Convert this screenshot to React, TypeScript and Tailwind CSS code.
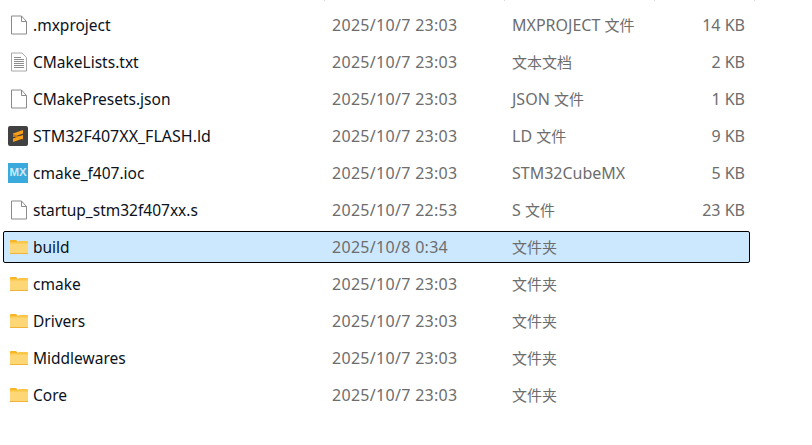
import { ReactNode } from "react";

const BlankFile = () => (
  <svg width="18" height="20" viewBox="0 0 18 20" fill="none">
    <path d="M1.500 1h10l5 5.500V19h-15z" fill="#fff" stroke="#8a8a8a" />
    <path d="M11.500 1v5.500h5" stroke="#8a8a8a" />
  </svg>
);

const TextFile = () => (
  <svg width="18" height="20" viewBox="0 0 18 20" fill="none">
    <path d="M1.500 1h10.500l4.500 4.500V19h-15z" fill="#fff" stroke="#a8a8a8" />
    <path d="M4 5.500h7M4 7.500h10M4 9.500h10M4 11.500h10M4 13.500h10M4 15.500h10" stroke="#8c8c8c" />
  </svg>
);

const SublimeIcon = () => (
  <svg width="20" height="20" viewBox="0 0 20 20" className="-ml-px">
    <rect width="20" height="20" rx="2" fill="#414141" />
    <path d="M5 7.500 15 4v3.500L5 11z" fill="#fb9f18" />
    <path d="M5 8 15 11.500v2L5 10.500z" fill="#c97a10" />
    <path d="M5 12.500 15 9v3.500L5 16z" fill="#fb9f18" />
  </svg>
);

const CubeMxIcon = () => (
  <div className="-ml-px flex h-5 w-5 items-center justify-center bg-[#3aa9dc] text-[11.5px] font-bold leading-none text-[#cfeaf7] font-['Liberation_Sans',sans-serif]">
    MX
  </div>
);

const FolderIcon = () => (
  <svg width="18" height="14" viewBox="0 0 18 14">
    <path d="M0 1a1 1 0 0 1 1-1h5l2 2h-8z" fill="#fbb522" />
    <path d="M0 3h18v10.500H0z" fill="#fdd675" />
    <path d="M0 2h8l1-1h8a1 1 0 0 1 1 1v1.500H0z" fill="#fbc545" />
    <path d="M0 13h18v1H0z" fill="#f2b33a" />
  </svg>
);

type Row = {
  name: string;
  date: string;
  type: string;
  typeCn?: string;
  size?: string;
  icon: ReactNode;
  selected?: boolean;
  caps?: boolean;
};

const rows: Row[] = [
  { name: ".mxproject", date: "2025/10/7 23:03", type: "MXPROJECT ", typeCn: "文件", size: "14 KB", icon: <BlankFile /> },
  { name: "CMakeLists.txt", date: "2025/10/7 23:03", type: "", typeCn: "文本文档", size: "2 KB", icon: <TextFile /> },
  { name: "CMakePresets.json", date: "2025/10/7 23:03", type: "JSON ", typeCn: "文件", size: "1 KB", icon: <BlankFile /> },
  { name: "STM32F407XX_FLASH.ld", date: "2025/10/7 23:03", type: "LD ", typeCn: "文件", size: "9 KB", icon: <SublimeIcon />, caps: true },
  { name: "cmake_f407.ioc", date: "2025/10/7 23:03", type: "STM32CubeMX", size: "5 KB", icon: <CubeMxIcon /> },
  { name: "startup_stm32f407xx.s", date: "2025/10/7 22:53", type: "S ", typeCn: "文件", size: "23 KB", icon: <BlankFile /> },
  { name: "build", date: "2025/10/8 0:34", type: "", typeCn: "文件夹", icon: <FolderIcon />, selected: true },
  { name: "cmake", date: "2025/10/7 23:03", type: "", typeCn: "文件夹", icon: <FolderIcon /> },
  { name: "Drivers", date: "2025/10/7 23:03", type: "", typeCn: "文件夹", icon: <FolderIcon /> },
  { name: "Middlewares", date: "2025/10/7 23:03", type: "", typeCn: "文件夹", icon: <FolderIcon /> },
  { name: "Core", date: "2025/10/7 23:03", type: "", typeCn: "文件夹", icon: <FolderIcon /> },
];

export default function App() {
  return (
    <div className="h-[445px] w-[812px] overflow-hidden bg-white text-[16px] font-['Noto_Sans','Noto_Sans_CJK_SC',sans-serif]">
      {/* column dividers of the cut-off header */}
      <div className="flex h-px">
        <div className="ml-[324px] w-px bg-[#d9d9d9]" />
        <div className="ml-[179px] w-px bg-[#d9d9d9]" />
        <div className="ml-[149px] w-px bg-[#d9d9d9]" />
        <div className="ml-[99px] w-px bg-[#d9d9d9]" />
      </div>
      <div className="ml-[3px] mt-[8px] flex w-[747px] flex-col gap-[5px]">
        {rows.map((row) => (
          <div
            key={row.name}
            className={`grid h-[32px] grid-cols-[29px_299px_180px_1fr] items-center rounded-[2px] pr-[4px] ${
              row.selected ? "border border-black bg-[#cce8ff]" : "border border-transparent"
            }`}
          >
            <div className="flex justify-center">{row.icon}</div>
            <span className={`text-[#0b1220] ${row.caps ? "text-[16px]" : "pt-[2px] text-[15.5px]"}`}>{row.name}</span>
            <span className="tracking-[0.3px] text-[#6d6d6d]">{row.date}</span>
            <div className="flex justify-between text-[#6d6d6d]">
              <span className="whitespace-pre">
                {row.type}
                <span className="text-[15px]">{row.typeCn}</span>
              </span>
              <span>{row.size}</span>
            </div>
          </div>
        ))}
      </div>
    </div>
  );
}
